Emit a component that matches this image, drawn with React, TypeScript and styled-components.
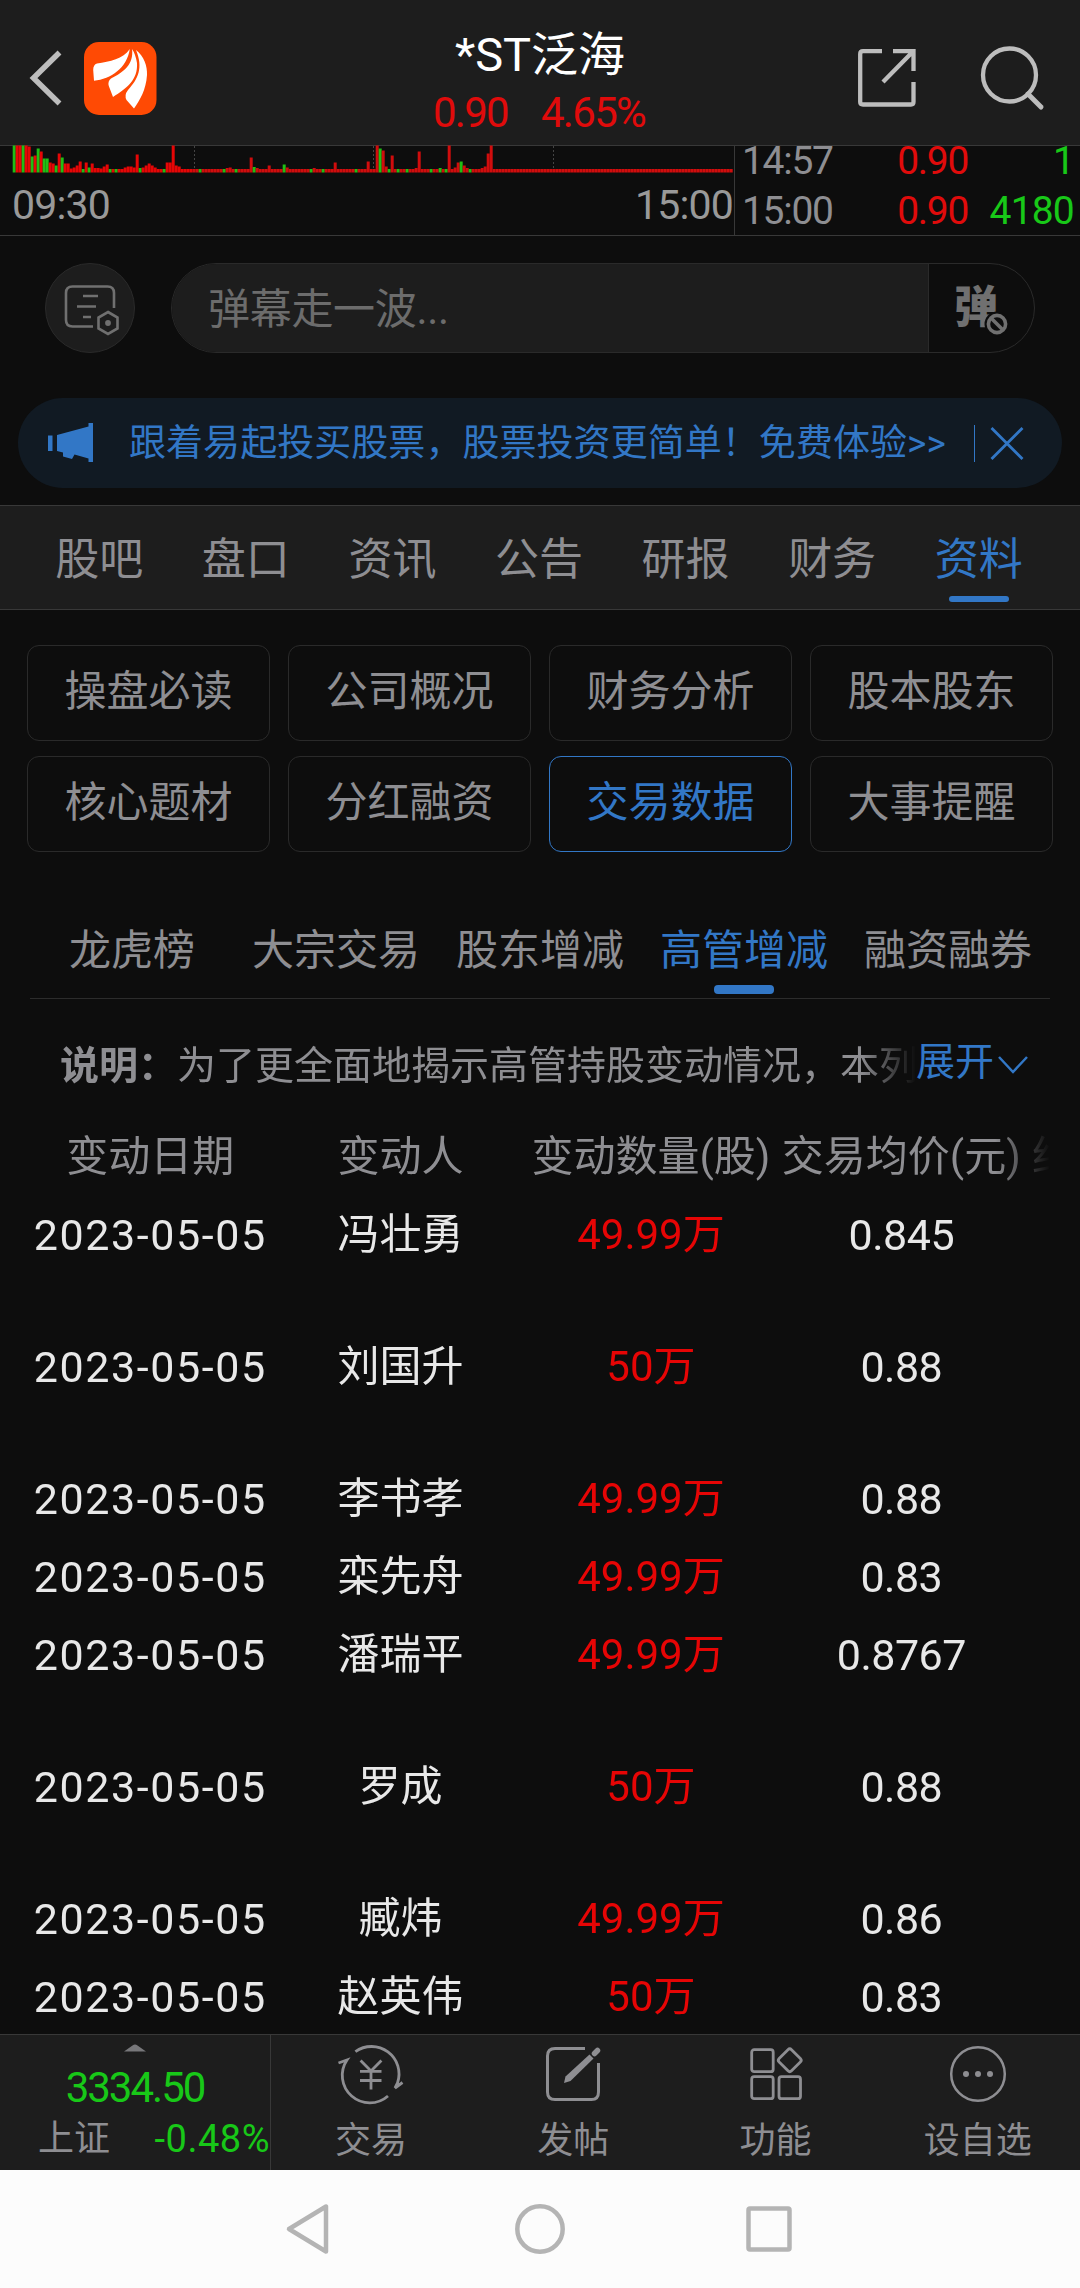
import React from "react";
import styled, { createGlobalStyle } from "styled-components";

const colors = {
  page: "#0d0d0d",
  panel: "#1d1d1d",
  line: "#383838",
  softLine: "#2a2a2a",
  grey: "#8e8e92",
  icon: "#bdbdbd",
  red: "#e00b0b",
  green: "#18c818",
  blue: "#3277c6",
  white: "#e8e8e8",
};

const GlobalStyle = createGlobalStyle`
  *, *::before, *::after { box-sizing: border-box; }
  body {
    margin: 0;
    background: ${colors.page};
    font-family: Roboto, "Noto Sans CJK SC", sans-serif;
  }
  svg { display: block; flex: none; overflow: visible; }
`;

const Screen = styled.div`
  width: 1080px;
  height: 2288px;
  display: flex;
  flex-direction: column;
  overflow: hidden;
  background: ${colors.page};
  color: ${colors.grey};
`;

/* ---------- header ---------- */

const Header = styled.header`
  flex: none;
  height: 146px;
  display: grid;
  grid-template-columns: 300px 1fr 300px;
  background: ${colors.panel};
  border-bottom: 1px solid ${colors.line};
`;

const HeaderLeft = styled.div`
  display: flex;
  align-items: center;
  gap: 22px;
  padding: 12px 0 0 29px;
`;

const HeaderRight = styled.div`
  display: flex;
  align-items: center;
  justify-content: flex-end;
  gap: 65px;
  padding: 11px 35px 0 0;
`;

const HeaderCenter = styled.div`
  display: flex;
  flex-direction: column;
  align-items: center;
  padding-top: 27px;
  white-space: nowrap;
`;

const Title = styled.h1`
  margin: 0;
  font-size: 47px;
  font-weight: 400;
  line-height: 56px;
  color: #fff;
`;

const Quote = styled.div`
  display: flex;
  gap: 33px;
  margin-right: 2px;
  font-size: 42px;
  line-height: 59px;
  letter-spacing: -1.7px;
  color: ${colors.red};
`;

/* ---------- intraday strip ---------- */

const Intraday = styled.section`
  flex: none;
  height: 90px;
  display: flex;
  border-bottom: 1px solid ${colors.line};
`;

const ChartPane = styled.div`
  width: 735px;
  border-right: 1px solid ${colors.line};
`;

const ChartTimes = styled.div`
  display: flex;
  justify-content: space-between;
  padding: 7px 1px 0 12px;
  font-size: 41px;
  line-height: 50px;
  letter-spacing: -0.8px;
  color: #999;
`;

const Ticks = styled.div`
  flex: 1;
  display: flex;
  flex-direction: column;
  padding: 0 6px 0 7px;
  margin-top: -10px;
`;

const Tick = styled.div`
  display: grid;
  grid-template-columns: 92px 134px 1fr;
  height: 50px;
  line-height: 50px;
  font-size: 39px;
  letter-spacing: -1.3px;
`;

const TickPrice = styled.span`
  text-align: right;
  color: ${colors.red};
`;

const TickVolume = styled.span`
  text-align: right;
  letter-spacing: -0.8px;
  color: ${colors.green};
`;

/* ---------- comment bar ---------- */

const CommentBar = styled.section`
  flex: none;
  display: flex;
  gap: 36px;
  padding: 27px 45px 0;
`;

const RoundButton = styled.button`
  width: 90px;
  height: 90px;
  padding: 0;
  border: 1px solid ${colors.softLine};
  border-radius: 50%;
  background: ${colors.panel};
`;

const CommentInput = styled.div`
  flex: none;
  width: 864px;
  height: 90px;
  display: flex;
  border: 1px solid ${colors.softLine};
  border-radius: 45px;
  overflow: hidden;
`;

const Placeholder = styled.div`
  width: 757px;
  padding-left: 36px;
  border-right: 1px solid ${colors.softLine};
  background: ${colors.panel};
  font-size: 42px;
  line-height: 91px;
  letter-spacing: -0.3px;
  color: #6c6c6c;
`;

const DanmakuToggle = styled.div`
  position: relative;
  flex: 1;
  padding-left: 25px;
  font-size: 44px;
  font-weight: 900;
  line-height: 89px;
  color: #707070;

  svg {
    position: absolute;
    left: 54px;
    top: 46px;
  }
`;

/* ---------- promotion banner ---------- */

const Banner = styled.section`
  flex: none;
  height: 90px;
  margin: 45px 18px 0;
  padding: 0 39px 0 30px;
  display: flex;
  align-items: center;
  border-radius: 45px;
  background: #111a23;
  color: ${colors.blue};
`;

const BannerText = styled.span`
  flex: 1;
  padding: 2px 0 0 35px;
  font-size: 37px;
  line-height: 60px;
  letter-spacing: 0.05px;
  white-space: nowrap;
`;

const BannerDivider = styled.i`
  width: 1px;
  height: 37px;
  margin-right: 16px;
  background: ${colors.blue};
`;

/* ---------- main tabs ---------- */

const MainTabs = styled.nav`
  flex: none;
  height: 105px;
  margin-top: 17px;
  padding: 0 28px 0 26px;
  display: grid;
  grid-template-columns: repeat(7, 1fr);
  border-top: 1px solid ${colors.line};
  border-bottom: 1px solid ${colors.line};
  background: ${colors.panel};
`;

const MainTab = styled.div<{ $active?: boolean }>`
  display: flex;
  flex-direction: column;
  align-items: center;
  padding-top: 19px;
  font-size: 44px;
  line-height: 71px;
  color: ${(p) => (p.$active ? colors.blue : colors.grey)};

  &::after {
    content: "";
    width: 60px;
    height: 6px;
    border-radius: 3px;
    background: ${(p) => (p.$active ? colors.blue : "transparent")};
  }
`;

/* ---------- section chips ---------- */

const Chips = styled.div`
  flex: none;
  display: grid;
  grid-template-columns: repeat(4, 243px);
  grid-auto-rows: 96px;
  gap: 15px 18px;
  padding: 35px 27px 0;
`;

const Chip = styled.div<{ $active?: boolean }>`
  border: 1px solid ${(p) => (p.$active ? colors.blue : colors.softLine)};
  border-radius: 12px;
  text-align: center;
  font-size: 42px;
  line-height: 92px;
  color: ${(p) => (p.$active ? colors.blue : colors.grey)};
`;

/* ---------- sub tabs ---------- */

const SubTabs = styled.nav`
  flex: none;
  height: 97px;
  margin: 50px 30px 0;
  display: grid;
  grid-template-columns: repeat(5, 1fr);
  border-bottom: 1px solid #2c2c2c;
`;

const SubTab = styled.div<{ $active?: boolean }>`
  display: flex;
  flex-direction: column;
  align-items: center;
  padding-top: 7px;
  font-size: 42px;
  line-height: 83px;
  white-space: nowrap;
  color: ${(p) => (p.$active ? colors.blue : colors.grey)};

  & > span {
    height: 76px;
  }

  &::after {
    content: "";
    width: 60px;
    height: 9px;
    border-radius: 4px;
    background: ${(p) => (p.$active ? colors.blue : "transparent")};
  }
`;

/* ---------- explanation ---------- */

const Note = styled.div`
  flex: none;
  display: flex;
  height: 60px;
  margin: 37px 50px 0 60px;
  white-space: nowrap;
  font-size: 39px;
  line-height: 60px;
`;

const NoteText = styled.div`
  width: 856px;
  overflow: hidden;
  mask-image: linear-gradient(90deg, #000 800px, transparent 856px);
`;

const Expand = styled.div`
  display: flex;
  align-items: center;
  gap: 3px;
  margin-top: -9px;
  color: ${colors.blue};
`;

/* ---------- table ---------- */

const TableArea = styled.div`
  flex: 1;
  min-height: 0;
  width: 1025px;
  margin: 20px 0 0 25px;
  overflow: hidden;
  mask-image: linear-gradient(90deg, #000 970px, transparent 1025px);
`;

const Row = styled.div<{ $tall?: boolean }>`
  width: 1252px;
  height: ${(p) => (p.$tall ? 132 : 78)}px;
  display: grid;
  grid-template-columns: repeat(5, 250.4px);
  text-align: center;
  white-space: nowrap;
  font-size: 42px;
  line-height: 78px;
`;

const HeadRow = styled(Row)`
  height: 80px;
  padding-top: 2px;
`;

const DateCell = styled.span`
  font-size: 43px;
  letter-spacing: 1.6px;
  color: ${colors.white};
`;

const NameCell = styled.span`
  color: ${colors.white};
`;

const AmountCell = styled.span`
  color: #e60505;
`;

const PriceCell = styled.span`
  font-size: 43px;
  letter-spacing: -0.5px;
  color: ${colors.white};
`;

/* ---------- bottom toolbar ---------- */

const Toolbar = styled.footer`
  flex: none;
  height: 136px;
  display: grid;
  grid-template-columns: 271px repeat(4, 1fr);
  border-top: 1px solid ${colors.line};
  background: ${colors.panel};
`;

const IndexBox = styled.div`
  display: flex;
  flex-direction: column;
  align-items: center;
  padding-top: 9px;
  border-right: 1px solid ${colors.line};
`;

const IndexValue = styled.div`
  margin-top: 9px;
  font-size: 42px;
  line-height: 54px;
  letter-spacing: -2px;
  color: ${colors.green};
`;

const IndexLine = styled.div`
  align-self: stretch;
  display: flex;
  justify-content: space-between;
  padding: 0 0 0 38px;
  font-size: 36px;
  line-height: 48px;
`;

const IndexChange = styled.span`
  font-size: 38px;
  letter-spacing: 0.5px;
  color: ${colors.green};
`;

const ToolItem = styled.div`
  display: flex;
  flex-direction: column;
  align-items: center;
  padding: 7px 2px 0 0;
  gap: 15px;
  font-size: 36px;
  line-height: 44px;
`;

/* ---------- system navigation ---------- */

const SystemNav = styled.div`
  flex: none;
  height: 118px;
  display: flex;
  align-items: center;
  justify-content: center;
  gap: 180px;
  background: #fcfcfc;
`;

/* ---------- drawings ---------- */

type Bar = [height: number, green?: boolean];

/* Per-minute volume; minutes that are not listed hold the minimum height. */
const volume: Record<number, Bar> = {
  0: [27, true], 1: [27], 2: [27], 3: [27, true], 4: [27], 5: [26], 6: [16, true],
  7: [17], 8: [24, true], 9: [21], 10: [14, true], 11: [14, true], 12: [10], 13: [9],
  14: [7, true], 15: [19], 16: [15, true], 17: [9], 18: [9], 19: [4], 20: [5], 21: [7],
  22: [11], 23: [3.5, true], 24: [10], 25: [5, true], 26: [9], 27: [4.5], 28: [4.5],
  29: [4], 30: [6], 31: [8], 32: [3.5, true], 34: [3.5, true], 37: [5], 38: [6],
  39: [6], 40: [5], 41: [18], 42: [4.5, true], 43: [5], 44: [7], 45: [9], 46: [7],
  47: [5], 50: [3.5, true], 51: [10], 52: [10], 53: [27], 54: [7], 55: [6],
  62: [3.5, true], 70: [3.5, true], 71: [4.5], 72: [5], 74: [3.5, true], 79: [15],
  80: [5.5, true], 81: [4.5], 85: [7], 90: [8, true], 91: [5], 99: [3.5, true],
  100: [4.5], 103: [3.5, true], 107: [10], 114: [3.5, true], 118: [11], 121: [27],
  122: [24, true], 123: [22], 124: [6], 125: [3.5, true], 126: [17],
  128: [3.5, true], 131: [3.5, true], 134: [4.5], 135: [21], 139: [3.5, true],
  142: [4.5, true], 144: [3.5, true], 145: [27], 147: [5], 148: [10],
  149: [11, true], 150: [7], 151: [4.5], 152: [3.5, true], 156: [4.5], 157: [6],
  158: [19], 159: [27],
};

const VolumeChart = () => (
  <svg width="734" height="27" viewBox="0 0 734 27">
    {[194.5, 373.5, 553.5].map((x) => (
      <path key={x} d={`M${x} 0V24`} stroke="#444" strokeDasharray="2 2" />
    ))}
    {Array.from({ length: 240 }, (_, i) => {
      const [h, green] = volume[i] ?? [3.5];
      return (
        <rect
          key={i}
          x={12.7 + i * 3}
          y={26.5 - h}
          width={3}
          height={h}
          fill={green ? "#1fbf14" : i < 60 ? "#e60606" : "#d00d0d"}
        />
      );
    })}
  </svg>
);

const BackIcon = () => (
  <svg width="33" height="56" viewBox="0 0 33 56" fill="none" stroke={colors.icon} strokeWidth="5.5">
    <path d="M30.5 1.5L4.5 27L30.5 52.5" />
  </svg>
);

const AppLogo = () => (
  <svg width="73" height="73" viewBox="0 0 73 73">
    <rect width="72.5" height="73" rx="15" fill="#ff4a04" />
    <g fill="#fff">
      <path d="M45.8 7C39 17 26 19.5 13 21.5Q9.2 22.5 9.2 28L10 38.7C27 37 43 26 45.8 7Z" />
      <path d="M48 7C50 22 40 30 27 36.5Q23.5 39 24.8 44L29 55C43 46 54 38 53 21Q51.5 12 48 7Z" />
      <path d="M52 8C60 14 63.5 24 63 33C62 48 56 58 50 66.5L42.5 58Q40 53 44 48C54 37 59.5 26 52 8Z" />
    </g>
  </svg>
);

const ShareIcon = () => (
  <svg width="58" height="58" viewBox="0 0 58 58" fill="none" stroke={colors.icon} strokeWidth="4.3">
    <path d="M24 2.2H5Q2.2 2.2 2.2 5V53Q2.2 55.5 5 55.5H53Q55.5 55.5 55.5 53V33" />
    <path d="M35 2.2H55.5V22M54.5 3L25 33" />
  </svg>
);

const SearchIcon = () => (
  <svg width="64" height="64" viewBox="0 0 64 64" fill="none" stroke={colors.icon} strokeWidth="4.3">
    <circle cx="28.5" cy="29" r="26.5" />
    <path d="M47 48L60 61" strokeLinecap="round" strokeWidth="5" />
  </svg>
);

const DanmakuSettingsIcon = () => (
  <svg width="88" height="88" viewBox="1 1 88 88" fill="none" stroke="#707070" strokeWidth="2.6">
    <path d="M69 45V30Q69 23.5 62.5 23.5H27.5Q21 23.5 21 30V57Q21 63.5 27.5 63.5H48" />
    <path d="M38 33H53M32 43.5H51M38 54H46" />
    <path d="M63 49L72.5 54.5V65.5L63 71L53.5 65.5V54.5Z" />
    <circle cx="63" cy="60" r="2.9" fill="#707070" stroke="none" />
  </svg>
);

const BanIcon = () => (
  <svg width="28" height="28" viewBox="0 0 28 28" fill="none">
    <circle cx="14" cy="14" r="12.5" fill={colors.page} />
    <circle cx="14" cy="14" r="8.6" stroke="#707070" strokeWidth="3.6" />
    <path d="M8 8L20 20" stroke="#707070" strokeWidth="3.6" />
  </svg>
);

const MegaphoneIcon = () => (
  <svg width="46" height="40" viewBox="0 0 46 40" fill={colors.blue}>
    <path d="M0 12.5H4.5V28H0ZM9 12L40.5 3.5V0H45V39H40.5V35.5L26.5 31.5L24 36L15 33.5V29.5L9 28Z" />
  </svg>
);

const CloseIcon = () => (
  <svg width="32" height="33" viewBox="0 0 32 33" stroke={colors.blue} strokeWidth="2.8">
    <path d="M0.5 1L31.5 32M31.5 1L0.5 32" />
  </svg>
);

const ChevronDown = () => (
  <svg width="32" height="20" viewBox="0 -3 32 20" fill="none" stroke={colors.blue} strokeWidth="2.5">
    <path d="M2 2L16 17L30 2" />
  </svg>
);

const TradeIcon = () => (
  <svg width="70" height="62" viewBox="1 0 70 62" fill="none" stroke={colors.grey} strokeWidth="2.8">
    <path d="M20.4 9.7A27.5 27.5 0 0 1 62.5 41L60 46L67.5 40.5" />
    <path d="M53 54A27.5 27.5 0 0 1 12 18L3.5 21" />
    <path d="M25.6 18.5L36 29L46.4 18.5M25 29.3H46.5M25 38.5H46.5M36 29V47.5" />
  </svg>
);

const PostIcon = () => (
  <svg width="58" height="62" viewBox="0 -3 58 62" fill="none" stroke={colors.grey} strokeWidth="3">
    <path d="M41 3.5H11Q3.5 3.5 3.5 11V47Q3.5 54.5 11 54.5H47.5Q54.5 54.5 54.5 47V18" />
    <path d="M20 38L21.5 31.5L45.5 9.5L49.5 13.5L26.5 36Z" fill={colors.grey} stroke="none" />
    <path d="M50.5 8.5L53.5 5.5" strokeWidth="5.5" strokeLinecap="round" />
  </svg>
);

const ModulesIcon = () => (
  <svg width="56" height="62" viewBox="0 -4 56 62" fill="none" stroke={colors.grey} strokeWidth="2.8">
    <rect x="3.7" y="3.7" width="21.5" height="22" rx="2.5" />
    <rect x="3.7" y="30.7" width="21.5" height="22" rx="2.5" />
    <rect x="31" y="30.7" width="21.5" height="22" rx="2.5" />
    <rect x="33" y="5.5" width="17.5" height="17.5" rx="2.5" transform="rotate(45 41.75 14.25)" />
  </svg>
);

const MoreIcon = () => (
  <svg width="58" height="62" viewBox="0 -2 58 62" fill="none" stroke={colors.grey} strokeWidth="2.5">
    <circle cx="29" cy="30" r="26.8" />
    <g fill={colors.grey} stroke="none">
      <circle cx="17" cy="30" r="3" />
      <circle cx="29" cy="30" r="3" />
      <circle cx="41" cy="30" r="3" />
    </g>
  </svg>
);

const UpMark = () => (
  <svg width="22" height="8" viewBox="0 0 22 8" fill="#77777a">
    <path d="M0 7.5L8.5 1.5Q11 -0.5 13.5 1.5L22 7.5Z" />
  </svg>
);

const NavBackIcon = () => (
  <svg width="50" height="52" viewBox="-1 0 50 52" fill="none" stroke="#b4b4b4" strokeWidth="4.5" strokeLinejoin="round">
    <path d="M41 3.5V48.5L4 26Z" />
  </svg>
);

const NavHomeIcon = () => (
  <svg width="52" height="52" viewBox="0 0 52 52" fill="none" stroke="#b4b4b4" strokeWidth="4.5">
    <circle cx="26" cy="26" r="22.7" />
  </svg>
);

const NavRecentIcon = () => (
  <svg width="50" height="52" viewBox="-1.5 0 50 52" fill="none" stroke="#b4b4b4" strokeWidth="4.5">
    <rect x="1" y="5.5" width="41" height="41" rx="1.5" />
  </svg>
);

/* ---------- content ---------- */

const mainTabs = ["股吧", "盘口", "资讯", "公告", "研报", "财务", "资料"];
const chips = ["操盘必读", "公司概况", "财务分析", "股本股东", "核心题材", "分红融资", "交易数据", "大事提醒"];
const subTabs = ["龙虎榜", "大宗交易", "股东增减", "高管增减", "融资融券"];
const tableHead = ["变动日期", "变动人", "变动数量(股)", "交易均价(元)", "结存股票(股)"];

const changes = [
  { date: "2023-05-05", name: "冯壮勇", amount: "49.99万", price: "0.845", tall: true },
  { date: "2023-05-05", name: "刘国升", amount: "50万", price: "0.88", tall: true },
  { date: "2023-05-05", name: "李书孝", amount: "49.99万", price: "0.88" },
  { date: "2023-05-05", name: "栾先舟", amount: "49.99万", price: "0.83" },
  { date: "2023-05-05", name: "潘瑞平", amount: "49.99万", price: "0.8767", tall: true },
  { date: "2023-05-05", name: "罗成", amount: "50万", price: "0.88", tall: true },
  { date: "2023-05-05", name: "臧炜", amount: "49.99万", price: "0.86" },
  { date: "2023-05-05", name: "赵英伟", amount: "50万", price: "0.83" },
];

const tools = [
  { label: "交易", Icon: TradeIcon },
  { label: "发帖", Icon: PostIcon },
  { label: "功能", Icon: ModulesIcon },
  { label: "设自选", Icon: MoreIcon },
];

export default function App() {
  return (
    <>
      <GlobalStyle />
      <Screen>
        <Header>
          <HeaderLeft>
            <BackIcon />
            <AppLogo />
          </HeaderLeft>
          <HeaderCenter>
            <Title>*ST泛海</Title>
            <Quote>
              <span>0.90</span>
              <span>4.65%</span>
            </Quote>
          </HeaderCenter>
          <HeaderRight>
            <ShareIcon />
            <SearchIcon />
          </HeaderRight>
        </Header>

        <Intraday>
          <ChartPane>
            <VolumeChart />
            <ChartTimes>
              <span>09:30</span>
              <span>15:00</span>
            </ChartTimes>
          </ChartPane>
          <Ticks>
            <Tick>
              <span>14:57</span>
              <TickPrice>0.90</TickPrice>
              <TickVolume>1</TickVolume>
            </Tick>
            <Tick>
              <span>15:00</span>
              <TickPrice>0.90</TickPrice>
              <TickVolume>4180</TickVolume>
            </Tick>
          </Ticks>
        </Intraday>

        <CommentBar>
          <RoundButton>
            <DanmakuSettingsIcon />
          </RoundButton>
          <CommentInput>
            <Placeholder>弹幕走一波...</Placeholder>
            <DanmakuToggle>
              弹
              <BanIcon />
            </DanmakuToggle>
          </CommentInput>
        </CommentBar>

        <Banner>
          <MegaphoneIcon />
          <BannerText>跟着易起投买股票，股票投资更简单！免费体验&gt;&gt;</BannerText>
          <BannerDivider />
          <CloseIcon />
        </Banner>

        <MainTabs>
          {mainTabs.map((t) => (
            <MainTab key={t} $active={t === "资料"}>
              {t}
            </MainTab>
          ))}
        </MainTabs>

        <Chips>
          {chips.map((c) => (
            <Chip key={c} $active={c === "交易数据"}>
              {c}
            </Chip>
          ))}
        </Chips>

        <SubTabs>
          {subTabs.map((t) => (
            <SubTab key={t} $active={t === "高管增减"}>
              <span>{t}</span>
            </SubTab>
          ))}
        </SubTabs>

        <Note>
          <NoteText>
            <b>说明：</b>为了更全面地揭示高管持股变动情况，本列
          </NoteText>
          <Expand>
            展开
            <ChevronDown />
          </Expand>
        </Note>

        <TableArea>
          <HeadRow>
            {tableHead.map((h) => (
              <span key={h}>{h}</span>
            ))}
          </HeadRow>
          {changes.map((c) => (
            <Row key={c.name} $tall={c.tall}>
              <DateCell>{c.date}</DateCell>
              <NameCell>{c.name}</NameCell>
              <AmountCell>{c.amount}</AmountCell>
              <PriceCell>{c.price}</PriceCell>
            </Row>
          ))}
        </TableArea>

        <Toolbar>
          <IndexBox>
            <UpMark />
            <IndexValue>3334.50</IndexValue>
            <IndexLine>
              <span>上证</span>
              <IndexChange>-0.48%</IndexChange>
            </IndexLine>
          </IndexBox>
          {tools.map(({ label, Icon }) => (
            <ToolItem key={label}>
              <Icon />
              {label}
            </ToolItem>
          ))}
        </Toolbar>

        <SystemNav>
          <NavBackIcon />
          <NavHomeIcon />
          <NavRecentIcon />
        </SystemNav>
      </Screen>
    </>
  );
}
